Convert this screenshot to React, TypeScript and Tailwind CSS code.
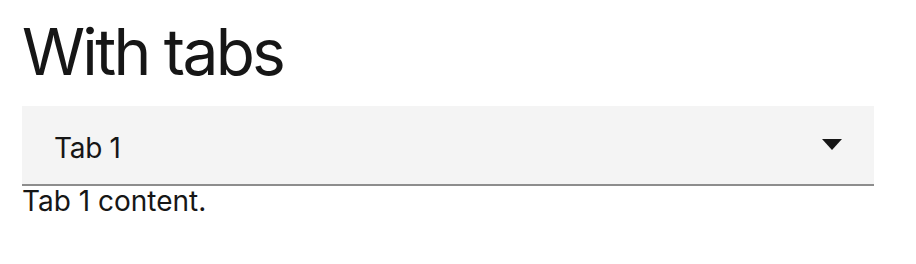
import React, { useState } from 'react';

const tabs = ['Tab 1', 'Tab 2', 'Tab 3'];

function App() {
  const [selected, setSelected] = useState(0);

  return (
    <div className="px-[22px] pt-[14px] text-[#161616]" style={{ fontFamily: 'Inter, "Noto Sans", sans-serif' }}>
      <h1 className="text-[64px] leading-[76px] font-normal tracking-[-2.7px]">With tabs</h1>
      <div className="mt-[16px] w-[852px]">
        <div className="relative h-[80px] bg-[#f4f4f4] border-b-2 border-[#8d8d8d]">
          <select
            value={selected}
            onChange={e => setSelected(Number(e.target.value))}
            className="w-full h-full appearance-none bg-transparent pl-[32px] pr-[80px] pt-[6px] text-[28px] tracking-[-0.3px] text-[#161616] outline-none"
            style={{ fontFamily: 'Inter, "Noto Sans", sans-serif' }}
          >
            {tabs.map((t, i) => (
              <option key={t} value={i}>{t}</option>
            ))}
          </select>
          <svg className="absolute right-[32px] top-[33px] pointer-events-none" width="20" height="12" viewBox="0 0 20 12">
            <path d="M0 0h20L10 11z" fill="#161616" />
          </svg>
        </div>
        <div className="text-[28px] leading-[30px]">{tabs[selected]} content.</div>
      </div>
    </div>
  );
}

export default App;
